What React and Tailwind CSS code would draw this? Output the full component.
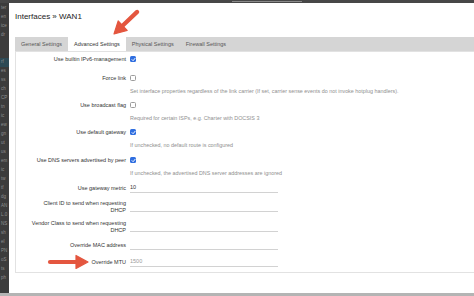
import React from "react";

function Check({ checked }) {
  if (checked) {
    return (
      <span className="flex h-[6px] w-[6px] items-center justify-center rounded-[1.5px] bg-[#2f6ee0]">
        <svg viewBox="0 0 10 10" className="h-[5px] w-[5px]">
          <path d="M2 5.2 L4.2 7.4 L8.2 2.6" stroke="#ffffff" strokeWidth="1.9" fill="none" strokeLinecap="round" strokeLinejoin="round" />
        </svg>
      </span>
    );
  }
  return <span className="block h-[6px] w-[6px] rounded-[1.5px] border border-[#9c9c9c] bg-white" />;
}

function Label({ children }) {
  return <div className="w-[110px] shrink-0 text-right text-[5.5px] leading-[7px] text-[#333333]">{children}</div>;
}

function CheckRow({ label, checked, className }) {
  return (
    <div className={"flex h-[8px] items-center " + className}>
      <Label>{label}</Label>
      <div className="ml-[4px]">
        <Check checked={checked} />
      </div>
    </div>
  );
}

function Desc({ children, className }) {
  return (
    <div className={"ml-[114px] h-[8px] whitespace-nowrap text-[5.4px] leading-[8px] text-[#8f8f8f] " + className}>
      {children}
    </div>
  );
}

function InputRow({ label, value, muted, className, tall }) {
  return (
    <div className={"flex items-center " + (tall ? "h-[14px] " : "h-[10px] ") + className}>
      <Label>{label}</Label>
      <div
        className={
          "ml-[4px] flex h-[10px] w-[148px] items-center border-b border-[#d2d2d2] text-[5.5px] " +
          (muted ? "text-[#9a9a9a]" : "text-[#333333]")
        }
      >
        {value}
      </div>
    </div>
  );
}

const sideFragments = [
  "ter", "en", "ice", "dr", "", "", "rf", "es", "ss",
  "ch", "CP", "tn", "ic", "ew", "gn", "ut", "us",
  "em", "ic", "tw", "tf", "dg", "AN", "L.0", "NS", "sh",
  "el", "PN", "oS", "ts", "ph",
];

function Arrow({ x, y, angle, length }) {
  return (
    <g transform={`translate(${x} ${y}) rotate(${angle})`}>
      <line x1={-length} y1="0" x2="-10" y2="0" stroke="#e4563f" strokeWidth="4.2" strokeLinecap="round" />
      <polygon points="0,0 -12,-6.5 -12,6.5" fill="#e4563f" stroke="#e4563f" strokeWidth="1.2" strokeLinejoin="round" />
    </g>
  );
}

export default function App() {
  return (
    <div className="relative flex h-[296px] w-[474px] flex-col overflow-hidden bg-[#3e3e3e] font-['Liberation_Sans',Arial,sans-serif]">
      {/* top strip of the page behind */}
      <div className="flex h-[3px] shrink-0 bg-[#474747]">
        <div className="ml-[232px] mt-[1px] h-[1px] w-[70px] bg-[#8a8a8a]" />
      </div>
      <div className="flex min-h-0 flex-1">
        {/* left strip of the page behind */}
        <div className="flex w-[9px] shrink-0 flex-col overflow-hidden bg-[#3c3c3c] pt-[1px]">
          {sideFragments.map((t, i) => (
            <div
              key={i}
              className={
                "flex h-[9px] shrink-0 items-center whitespace-nowrap pl-[1px] text-[4.5px] text-[#8f8f8f] " +
                (i === 6 ? "bg-[#2e4a55]" : "")
              }
            >
              {t}
            </div>
          ))}
        </div>
        {/* modal */}
        <div className="flex w-[520px] shrink-0 flex-col bg-white px-[6px]">
          <div className="mt-[9px] h-[10px] text-[8px] leading-[10px] text-[#222222]">Interfaces » WAN1</div>
          <div className="mt-[15px] flex h-[14px] bg-[#d5d5d5] text-[5.5px]">
            <div className="flex items-center px-[6px] text-[#555555]">General Settings</div>
            <div className="flex items-center bg-white px-[6px] text-[#333333]">Advanced Settings</div>
            <div className="flex items-center px-[6px] text-[#555555]">Physical Settings</div>
            <div className="flex items-center px-[6px] text-[#555555]">Firewall Settings</div>
          </div>
          <div className="flex flex-col border border-[#e2e2e2] pb-[5px]">
            <CheckRow className="mt-[3px]" label="Use builtin IPv6-management" checked />
            <CheckRow className="mt-[11px]" label="Force link" />
            <Desc className="mt-[5px]">
              Set interface properties regardless of the link carrier (If set, carrier sense events do not invoke hotplug handlers).
            </Desc>
            <CheckRow className="mt-[6px]" label="Use broadcast flag" />
            <Desc className="mt-[5px]">Required for certain ISPs, e.g. Charter with DOCSIS 3</Desc>
            <CheckRow className="mt-[6px]" label="Use default gateway" checked />
            <Desc className="mt-[5px]">If unchecked, no default route is configured</Desc>
            <CheckRow className="mt-[7px]" label="Use DNS servers advertised by peer" checked />
            <Desc className="mt-[5px]">If unchecked, the advertised DNS server addresses are ignored</Desc>
            <InputRow className="mt-[6px]" label="Use gateway metric" value="10" />
            <InputRow
              className="mt-[7px]"
              tall
              label={
                <>
                  Client ID to send when requesting
                  <br />
                  DHCP
                </>
              }
            />
            <InputRow
              className="mt-[6px]"
              tall
              label={
                <>
                  Vendor Class to send when requesting
                  <br />
                  DHCP
                </>
              }
            />
            <InputRow className="mt-[6px]" label="Override MAC address" />
            <InputRow className="mt-[7px]" label="Override MTU" value="1500" muted />
          </div>
        </div>
      </div>
      {/* bottom strip of the page behind */}
      <div className="h-[3px] shrink-0 bg-[#b4b4b4]" />

      {/* annotation arrows */}
      <svg className="pointer-events-none absolute left-0 top-0" width="474" height="296" viewBox="0 0 474 296">
        <Arrow x={114} y={34} angle={136.3} length={32} />
        <Arrow x={88} y={262} angle={0} length={38} />
      </svg>
    </div>
  );
}
